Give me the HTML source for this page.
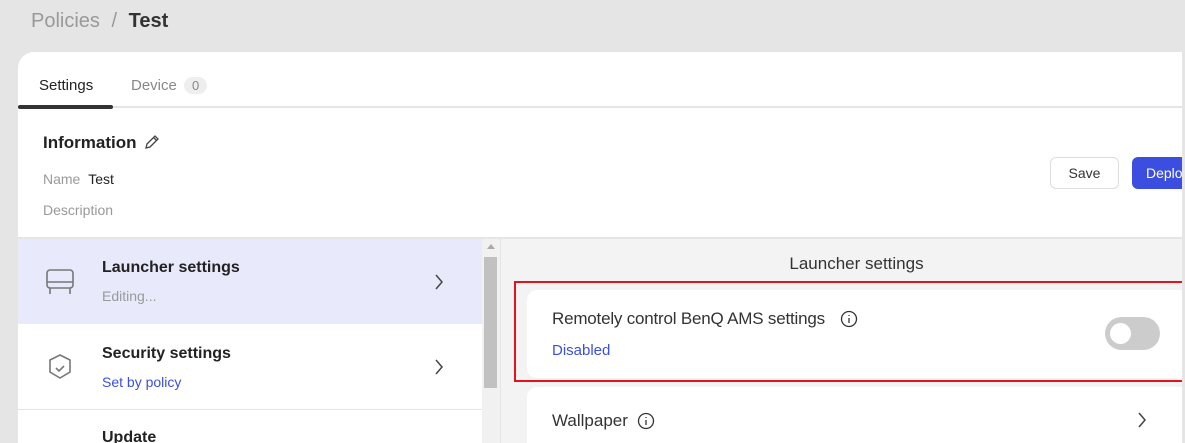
<!DOCTYPE html>
<html><head><style>
*{box-sizing:border-box;margin:0;padding:0}
body{width:1185px;height:443px;overflow:hidden;background:#e5e5e5;font-family:"Liberation Sans",sans-serif;position:relative;color:#222}
.a{position:absolute}
</style></head><body>
<div class="a" style="left:31px;top:10px;font-size:20px;color:#999">Policies <span style="margin:0 6px">/</span> <span style="color:#333;font-weight:bold">Test</span></div>
<div class="a" style="left:18px;top:52px;width:1164px;height:391px;background:#fff;border-top-left-radius:16px;overflow:hidden">
 <div class="a" style="left:21px;top:25px;font-size:15px;color:#222">Settings</div>
 <div class="a" style="left:113px;top:25px;font-size:15px;color:#888">Device <span style="display:inline-block;background:#eee;border-radius:10px;padding:1px 8px;font-size:13px;margin-left:3px">0</span></div>
 <div class="a" style="left:0;top:54px;width:100%;height:2px;background:#e5e5e5"></div>
 <div class="a" style="left:0;top:53px;width:95px;height:4px;background:#333;border-radius:2px"></div>
 <div class="a" style="left:25px;top:81px;font-size:17px;font-weight:bold;color:#222">Information</div>
 <svg class="a" style="left:126px;top:82px" width="16" height="16" viewBox="0 0 16 16" fill="none" stroke="#444" stroke-width="1.3"><path d="M2 14l1-4 8-8 3 3-8 8z M9.5 3.5l3 3"/></svg>
 <div class="a" style="left:25px;top:119px;font-size:14px;color:#999">Name <span style="color:#222;margin-left:4px">Test</span></div>
 <div class="a" style="left:25px;top:150px;font-size:14px;color:#999">Description</div>
 <div class="a" style="left:1032px;top:105px;width:69px;height:32px;border:1px solid #ddd;border-radius:6px;font-size:14px;text-align:center;line-height:30px;color:#333">Save</div>
 <div class="a" style="left:1114px;top:105px;width:80px;height:32px;background:#3b4ee0;border-radius:6px;font-size:14px;color:#fff;line-height:32px;padding-left:14px">Deploy</div>
 <div class="a" style="left:0;top:185px;width:100%;height:2px;background:#e5e5e5"></div>
 <div class="a" style="left:0;top:187px;width:464px;height:85px;background:#e8eafc"></div>
 <svg class="a" style="left:27px;top:215px" width="30" height="30" viewBox="0 0 30 30" fill="none" stroke="#777" stroke-width="1.6"><rect x="2" y="3" width="26" height="18" rx="3"/><path d="M2 15h26M5 21v6M25 21v6"/></svg>
 <div class="a" style="left:84px;top:207px;font-size:16px;font-weight:bold">Launcher settings</div>
 <div class="a" style="left:84px;top:236px;font-size:14px;color:#999">Editing...</div>
 <svg class="a" style="left:416px;top:222px" width="10" height="16" fill="none" stroke="#444" stroke-width="1.5"><path d="M2 1l6 7-6 7"/></svg>
 <div class="a" style="left:0;top:357px;width:464px;height:1px;background:#e5e5e5"></div>
 <svg class="a" style="left:29px;top:301px" width="26" height="30" viewBox="0 0 26 30" fill="none" stroke="#777" stroke-width="1.6"><path d="M13 2l10 5v12l-10 6-10-6V7z"/><path d="M9 15l3 3 5-5"/></svg>
 <div class="a" style="left:84px;top:293px;font-size:16px;font-weight:bold">Security settings</div>
 <div class="a" style="left:84px;top:322px;font-size:14px;color:#3b4ee0">Set by policy</div>
 <svg class="a" style="left:416px;top:307px" width="10" height="16" fill="none" stroke="#444" stroke-width="1.5"><path d="M2 1l6 7-6 7"/></svg>
 <div class="a" style="left:84px;top:377px;font-size:16px;font-weight:bold">Update</div>
 <div class="a" style="left:464px;top:187px;width:18px;height:204px;background:#f1f1f1"></div>
 <div class="a" style="left:469px;top:192px;width:0;height:0;border-left:4px solid transparent;border-right:4px solid transparent;border-bottom:5px solid #aaa"></div>
 <div class="a" style="left:466px;top:205px;width:13px;height:131px;background:#c1c1c1"></div>
 <div class="a" style="left:482px;top:187px;width:700px;height:204px;background:#f3f3f3;border-left:1px solid #e5e5e5"></div>
 <div class="a" style="left:482px;top:202px;width:713px;text-align:center;font-size:17px;color:#333">Launcher settings</div>
 <div class="a" style="left:509px;top:238px;width:680px;height:88px;background:#fff;border-radius:10px"></div>
 <div class="a" style="left:534px;top:257px;font-size:17px;color:#333;letter-spacing:-0.2px">Remotely control BenQ AMS settings</div>
 <svg class="a" style="left:822px;top:258px" width="18" height="18" fill="none" stroke="#333" stroke-width="1.3"><circle cx="9" cy="9" r="7.5"/><path d="M9 8v5M9 5v1"/></svg>
 <div class="a" style="left:534px;top:290px;font-size:15px;color:#3b4ee0">Disabled</div>
 <div class="a" style="left:1087px;top:265px;width:55px;height:33px;background:#ccc;border-radius:17px"><div class="a" style="left:5px;top:6px;width:21px;height:21px;border-radius:50%;background:#fff"></div></div>
 <div class="a" style="left:496px;top:229px;width:675px;height:101px;border:2px solid #e0141b"></div>
 <div class="a" style="left:509px;top:335px;width:680px;height:70px;background:#fff;border-radius:10px"></div>
 <div class="a" style="left:534px;top:359px;font-size:17px;color:#333">Wallpaper</div>
 <svg class="a" style="left:619px;top:360px" width="18" height="18" fill="none" stroke="#333" stroke-width="1.3"><circle cx="9" cy="9" r="7.5"/><path d="M9 8v5M9 5v1"/></svg>
 <svg class="a" style="left:1119px;top:360px" width="10" height="16" fill="none" stroke="#444" stroke-width="1.5"><path d="M2 1l6 7-6 7"/></svg>
</div>
</body></html>
